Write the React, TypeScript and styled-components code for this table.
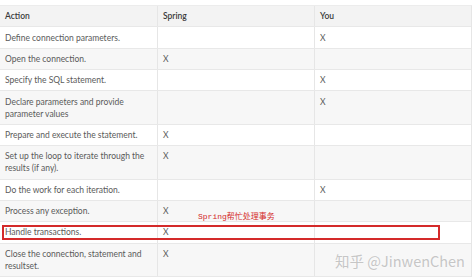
import React from 'react';
import styled, { createGlobalStyle } from 'styled-components';

const GlobalStyle = createGlobalStyle`
  html, body {
    margin: 0;
    padding: 0;
    background: #ffffff;
  }
  body {
    font-family: Lato, "Open Sans", sans-serif;
  }
`;

const Page = styled.div`
  position: relative;
  width: 474px;
  height: 280px;
  overflow: hidden;
  background: #ffffff;
  padding-top: 5px;
  box-sizing: border-box;
`;

const Table = styled.div`
  width: 472px;
  border-top: 1px solid #ececec;
  border-right: 1px solid #e6e6e6;
  box-sizing: border-box;
`;

const Row = styled.div<{ $shade?: boolean; $head?: boolean }>`
  position: relative;
  display: grid;
  grid-template-columns: 157px 157px 1fr;
  background: ${p => (p.$head ? '#f3f3f3' : p.$shade ? '#f7f7f7' : '#ffffff')};
  border-bottom: 1px solid #e8e8e8;
`;

const Cell = styled.div<{ $head?: boolean }>`
  padding: 4.25px 6px 4.12px 5px;
  font-size: 8.5px;
  line-height: 12px;
  color: ${p => (p.$head ? '#3a3a3a' : '#5a5a5a')};
  font-weight: ${p => (p.$head ? 600 : 400)};
  & + & {
    border-left: 1px solid #e6e6e6;
  }
`;

const Highlight = styled.div`
  position: absolute;
  left: 2px;
  top: 3px;
  width: 438px;
  height: 15px;
  border: 2px solid #d42a2a;
  box-sizing: border-box;
  pointer-events: none;
`;

const Note = styled.div`
  position: absolute;
  left: 198px;
  top: 212px;
  font-family: "Liberation Mono", "Noto Sans CJK SC", monospace;
  font-size: 8px;
  line-height: 10px;
  color: #d42a2a;
  white-space: nowrap;
`;

const Watermark = styled.div`
  position: absolute;
  left: 335px;
  top: 251px;
  font-family: "Noto Sans CJK SC", sans-serif;
  font-size: 14.5px;
  line-height: 20px;
  color: #c6c6c6;
  white-space: nowrap;
  text-shadow: 0 0 2px #ffffff;
`;

type Step = { action: string; spring?: boolean; you?: boolean; boxed?: boolean };

const steps: Step[] = [
  { action: 'Define connection parameters.', you: true },
  { action: 'Open the connection.', spring: true },
  { action: 'Specify the SQL statement.', you: true },
  { action: 'Declare parameters and provide parameter values', you: true },
  { action: 'Prepare and execute the statement.', spring: true },
  { action: 'Set up the loop to iterate through the results (if any).', spring: true },
  { action: 'Do the work for each iteration.', you: true },
  { action: 'Process any exception.', spring: true },
  { action: 'Handle transactions.', spring: true, boxed: true },
  { action: 'Close the connection, statement and resultset.', spring: true },
];

export default function App() {
  return (
    <Page>
      <GlobalStyle />
      <Table>
        <Row $head>
          <Cell $head>Action</Cell>
          <Cell $head>Spring</Cell>
          <Cell $head>You</Cell>
        </Row>
        {steps.map((s, i) => (
          <Row key={s.action} $shade={i % 2 === 1}>
            <Cell>{s.action}</Cell>
            <Cell>{s.spring ? 'X' : ''}</Cell>
            <Cell>{s.you ? 'X' : ''}</Cell>
            {s.boxed && <Highlight />}
          </Row>
        ))}
      </Table>
      <Note>Spring帮忙处理事务</Note>
      <Watermark>知乎 @JinwenChen</Watermark>
    </Page>
  );
}
